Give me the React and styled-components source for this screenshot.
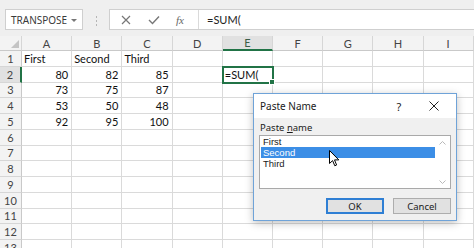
import React from 'react';
import styled, { createGlobalStyle } from 'styled-components';

const GlobalStyle = createGlobalStyle`
  html, body {
    margin: 0;
    padding: 0;
    background: #fff;
  }
  body {
    overflow: hidden;
  }
`;

const Page = styled.div`
  position: relative;
  width: 474px;
  height: 248px;
  overflow: hidden;
  background: #fff;
  font-family: Lato, "Liberation Sans", sans-serif;
`;

/* ---------- formula bar ---------- */

const FormulaBar = styled.div`
  display: flex;
  align-items: flex-start;
  height: 36px;
  padding: 9px 0 0 5px;
  box-sizing: border-box;
  background: #efefef;
`;

const NameBox = styled.div`
  display: flex;
  align-items: center;
  justify-content: space-between;
  width: 78px;
  height: 21px;
  box-sizing: border-box;
  padding: 0 5px 0 5px;
  background: #fff;
  border: 1px solid #cfcfcf;
  font-family: "Noto Sans", "Liberation Sans", sans-serif;
  font-size: 10px;
  color: #3a3a3a;
`;

const DropArrow = styled.span`
  width: 0;
  height: 0;
  border-left: 3px solid transparent;
  border-right: 3px solid transparent;
  border-top: 3px solid #777;
  margin-top: 1px;
`;

const Grip = styled.div`
  display: flex;
  flex-direction: column;
  gap: 2px;
  margin: 7px 0 0 13px;
`;

const GripDot = styled.span`
  width: 1px;
  height: 2px;
  background: #b5b5b5;
`;

const FormulaBox = styled.div`
  display: flex;
  flex: 1;
  height: 21px;
  margin-left: 12px;
  box-sizing: border-box;
  background: #fff;
  border: 1px solid #cfcfcf;
  border-right: none;
`;

const IconGroup = styled.div`
  display: flex;
  align-items: center;
  width: 88px;
  padding-left: 9px;
  gap: 15px;
  box-sizing: border-box;
`;

const IconSlot = styled.span`
  display: flex;
  align-items: center;
  justify-content: center;
  width: 13px;
  height: 13px;
`;

const Fx = styled.span`
  font-family: "Liberation Serif", serif;
  font-style: italic;
  font-size: 11px;
  color: #666;
  margin-left: 1px;
`;

const FormulaInput = styled.div`
  flex: 1;
  display: flex;
  align-items: center;
  padding-left: 8px;
  border-left: 1px solid #dadada;
  font-size: 11px;
  color: #222;
`;

/* ---------- sheet ---------- */

const Sheet = styled.div`
  display: grid;
  grid-template-columns: 22px repeat(9, 50.2px);
  grid-template-rows: 15px;
  grid-auto-rows: 15.75px;
  font-size: 11px;
`;

const Corner = styled.div`
  position: relative;
  background: #f3f3f3;
  border-right: 1px solid #d6d6d6;
  border-bottom: 1px solid #c9c9c9;
  box-sizing: border-box;

  &::after {
    content: '';
    position: absolute;
    right: 2px;
    bottom: 2px;
    border-left: 8px solid transparent;
    border-bottom: 8px solid #c4c4c4;
  }
`;

const ColHead = styled.div`
  display: flex;
  align-items: center;
  justify-content: center;
  box-sizing: border-box;
  background: ${p => (p.$active ? '#e1e1e1' : '#f3f3f3')};
  border-right: 1px solid #d6d6d6;
  border-bottom: ${p => (p.$active ? '2px solid #217346' : '1px solid #c9c9c9')};
  color: ${p => (p.$active ? '#3b5e48' : '#444')};
`;

const RowHead = styled.div`
  display: flex;
  align-items: center;
  justify-content: center;
  box-sizing: border-box;
  background: ${p => (p.$active ? '#e1e1e1' : '#f3f3f3')};
  border-right: ${p => (p.$active ? '2px solid #217346' : '1px solid #c9c9c9')};
  border-bottom: 1px solid #d6d6d6;
  color: #444;
`;

const Cell = styled.div`
  position: relative;
  display: flex;
  align-items: center;
  justify-content: ${p => (p.$num ? 'flex-end' : 'flex-start')};
  padding: 0 3px 0 2px;
  box-sizing: border-box;
  border-right: 1px solid #dadada;
  border-bottom: 1px solid #dadada;
  color: #111;
  white-space: nowrap;

  ${p =>
    p.$selected &&
    `
    outline: 2px solid #217346;
    outline-offset: -1px;
    z-index: 1;
    &::after {
      content: '';
      position: absolute;
      right: -3px;
      bottom: -3px;
      width: 4px;
      height: 4px;
      background: #217346;
      border: 1px solid #fff;
    }
  `}
`;

/* ---------- dialog ---------- */

const Dialog = styled.div`
  position: absolute;
  left: 253px;
  top: 93px;
  width: 204px;
  height: 128px;
  box-sizing: border-box;
  display: flex;
  flex-direction: column;
  background: #f0f0f0;
  border: 1px solid #6fa3d8;
  box-shadow: 0 2px 8px rgba(0, 0, 0, 0.25);
  font-family: "Noto Sans", "Liberation Sans", sans-serif;
  font-size: 9.5px;
  color: #1a1a1a;
  z-index: 2;
`;

const TitleBar = styled.div`
  display: flex;
  align-items: center;
  height: 24px;
  padding: 0 0 0 6px;
  background: #fff;
`;

const Title = styled.span`
  flex: 1;
  font-size: 10px;
`;

const TitleButton = styled.span`
  display: flex;
  align-items: center;
  justify-content: center;
  width: ${p => p.$w || 30}px;
  font-size: 11px;
  color: #222;
`;

const Body = styled.div`
  display: flex;
  flex-direction: column;
  flex: 1;
  padding: 4px 5px 6px 5px;
`;

const Label = styled.div`
  height: 12px;
  line-height: 12px;
  margin: 0 0 1px 1px;

  u {
    text-decoration: underline;
    text-underline-offset: 1px;
  }
`;

const ListBox = styled.div`
  display: flex;
  height: 54px;
  box-sizing: border-box;
  background: #fff;
  border: 1px solid #a9a9a9;
`;

const Items = styled.div`
  flex: 1;
  padding: 0 0 0 1px;
`;

const Item = styled.div`
  height: 11px;
  line-height: 11px;
  padding-left: 2px;
  font-family: "Liberation Sans", Arial, sans-serif;
  font-size: 9.5px;
  background: ${p => (p.$selected ? '#3c8ee6' : 'transparent')};
  color: ${p => (p.$selected ? '#fff' : '#1a1a1a')};
`;

const ScrollTrack = styled.div`
  display: flex;
  flex-direction: column;
  justify-content: space-between;
  align-items: center;
  width: 15px;
  padding: 5px 0 4px;
  box-sizing: border-box;
`;

const Buttons = styled.div`
  display: flex;
  justify-content: flex-end;
  gap: 9px;
  margin-top: auto;
`;

const Button = styled.div`
  display: flex;
  align-items: center;
  justify-content: center;
  width: 58px;
  height: 16px;
  box-sizing: border-box;
  background: #e1e1e1;
  border: ${p => (p.$primary ? '2px solid #2f7fd4' : '1px solid #adadad')};
  font-size: 9.5px;
`;

const Pointer = styled.svg`
  position: absolute;
  left: 329px;
  top: 150px;
  z-index: 3;
`;

const letters = ['A', 'B', 'C', 'D', 'E', 'F', 'G', 'H', 'I'];

const data = {
  1: { A: 'First', B: 'Second', C: 'Third' },
  2: { A: 80, B: 82, C: 85, E: '=SUM(' },
  3: { A: 73, B: 75, C: 87 },
  4: { A: 53, B: 50, C: 48 },
  5: { A: 92, B: 95, C: 100 },
};

const rowNumbers = Array.from({ length: 13 }, (_, i) => i + 1);

const Chevron = ({ up }) => (
  <svg width="7" height="4" viewBox="0 0 7 4">
    <polyline
      points={up ? '0.5,3.5 3.5,0.5 6.5,3.5' : '0.5,0.5 3.5,3.5 6.5,0.5'}
      fill="none"
      stroke="#b9b9b9"
      strokeWidth="1"
    />
  </svg>
);

const App = () => {
  return (
    <Page>
      <GlobalStyle />

      <FormulaBar>
        <NameBox>
          TRANSPOSE
          <DropArrow />
        </NameBox>
        <Grip>
          <GripDot />
          <GripDot />
          <GripDot />
        </Grip>
        <FormulaBox>
          <IconGroup>
            <IconSlot>
              <svg width="10" height="10" viewBox="0 0 10 10">
                <path d="M1 1 L9 9 M9 1 L1 9" stroke="#777" strokeWidth="1.2" fill="none" />
              </svg>
            </IconSlot>
            <IconSlot>
              <svg width="12" height="10" viewBox="0 0 12 10">
                <path d="M1 5 L4.5 8.5 L11 1.5" stroke="#777" strokeWidth="1.4" fill="none" />
              </svg>
            </IconSlot>
            <Fx>fx</Fx>
          </IconGroup>
          <FormulaInput>=SUM(</FormulaInput>
        </FormulaBox>
      </FormulaBar>

      <Sheet>
        <Corner />
        {letters.map(l => (
          <ColHead key={l} $active={l === 'E'}>
            {l}
          </ColHead>
        ))}
        {rowNumbers.map(r => (
          <React.Fragment key={r}>
            <RowHead $active={r === 2}>{r}</RowHead>
            {letters.map(l => {
              const v = data[r] && data[r][l];
              return (
                <Cell
                  key={l}
                  $num={typeof v === 'number'}
                  $selected={r === 2 && l === 'E'}
                >
                  {v}
                </Cell>
              );
            })}
          </React.Fragment>
        ))}
      </Sheet>

      <Dialog>
        <TitleBar>
          <Title>Paste Name</Title>
          <TitleButton $w={26}>?</TitleButton>
          <TitleButton $w={44}>
            <svg width="10" height="10" viewBox="0 0 10 10">
              <path d="M0.5 0.5 L9.5 9.5 M9.5 0.5 L0.5 9.5" stroke="#222" strokeWidth="1" fill="none" />
            </svg>
          </TitleButton>
        </TitleBar>
        <Body>
          <Label>
            Paste <u>n</u>ame
          </Label>
          <ListBox>
            <Items>
              <Item>First</Item>
              <Item $selected>Second</Item>
              <Item>Third</Item>
            </Items>
            <ScrollTrack>
              <Chevron up />
              <Chevron />
            </ScrollTrack>
          </ListBox>
          <Buttons>
            <Button $primary>OK</Button>
            <Button>Cancel</Button>
          </Buttons>
        </Body>
      </Dialog>

      <Pointer width="11" height="17" viewBox="0 0 11 17">
        <path
          d="M0.5 0.5 L0.5 13.5 L3.6 10.6 L5.8 15.8 L7.6 15 L5.5 9.9 L9.8 9.9 Z"
          fill="#fff"
          stroke="#000"
          strokeWidth="1"
          strokeLinejoin="miter"
        />
      </Pointer>
    </Page>
  );
};

export default App;
